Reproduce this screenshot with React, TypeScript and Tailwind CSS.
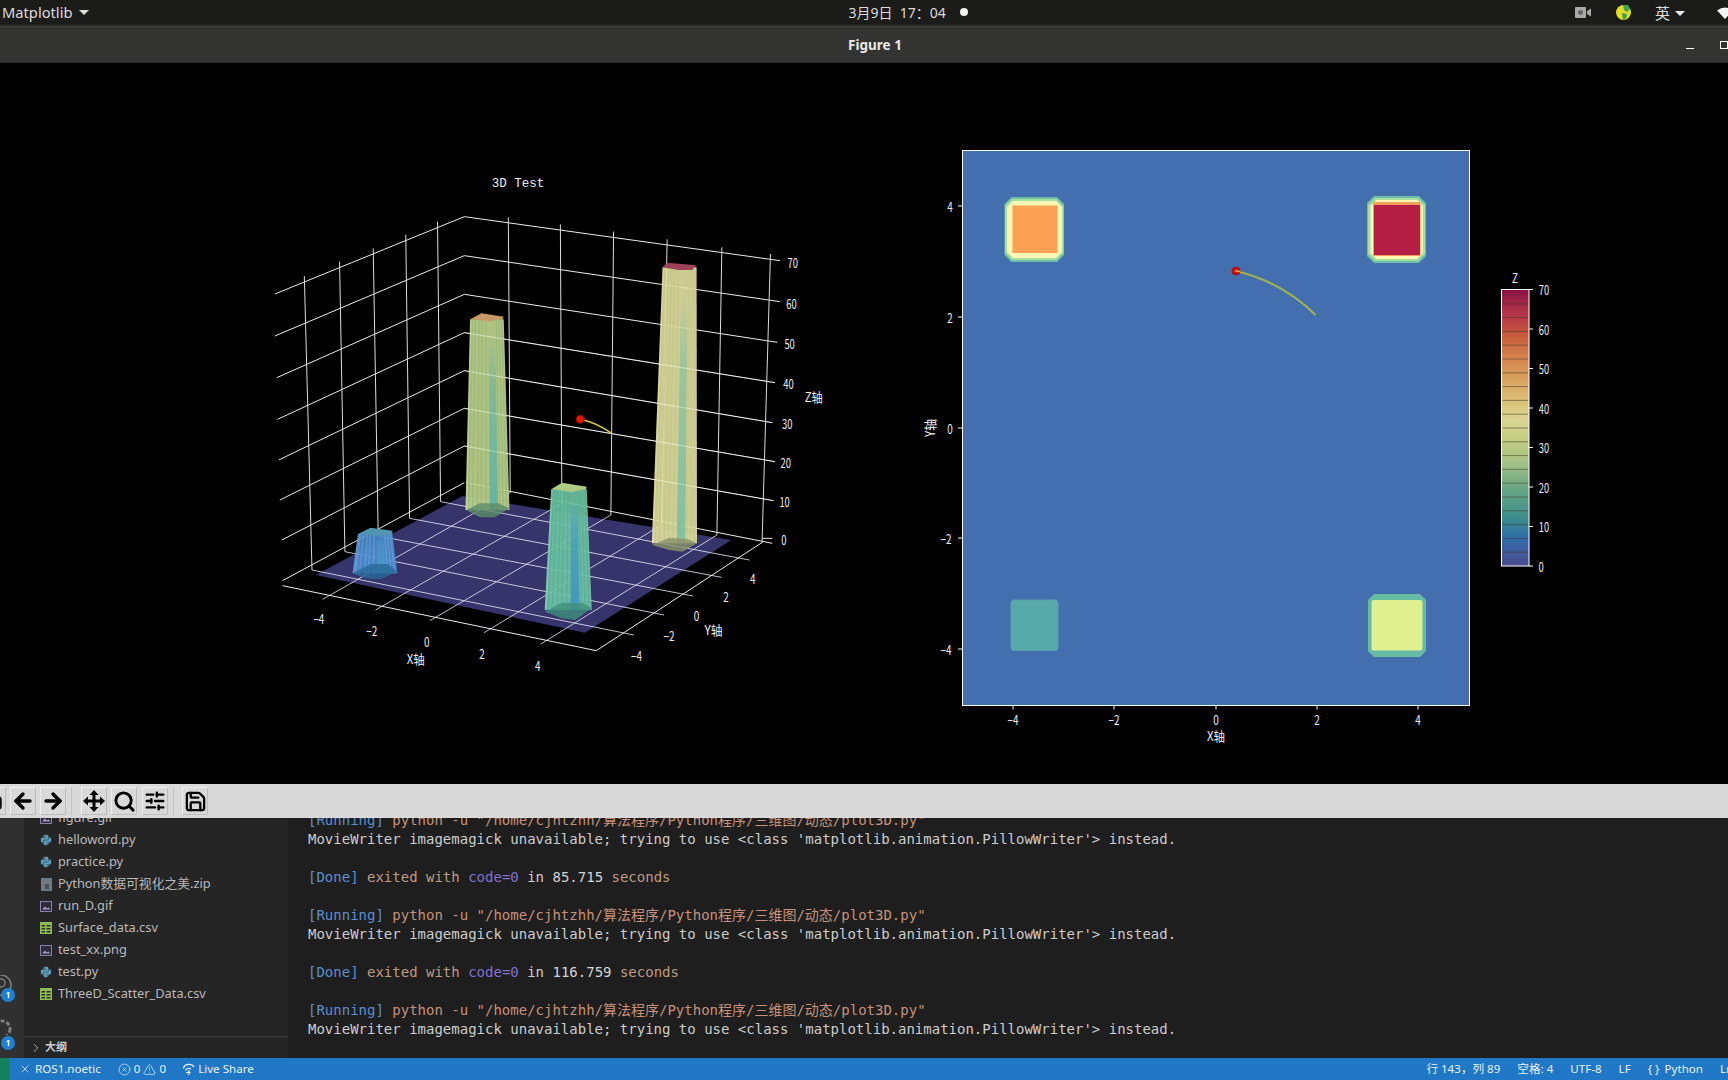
import { ArrowLeft, ArrowRight, ChevronRight, CircleX, Home, Save, Search, SlidersHorizontal, TriangleAlert, X } from "lucide-react"
import { FaPython } from "react-icons/fa"

const CHART_FONT = "'Noto Sans CJK SC', 'Liberation Sans', sans-serif"

// the 3D plot was measured on a stretched crop, so convert here
const px = (x: number) => x / 2.613
const py = (y: number) => y / 3
const pts = (list: number[][]) => list.map(([x, y]) => `${px(x)},${py(y)}`).join(" ")

function Seg({ a, b, c, w = 1 }: { a: number[]; b: number[]; c: string; w?: number }) {
  return <line x1={px(a[0])} y1={py(a[1])} x2={px(b[0])} y2={py(b[1])} stroke={c} strokeWidth={w} />
}

function Label({ x, y, t, w, rotate }: { x: number; y: number; t: string; w: number; rotate?: boolean }) {
  return (
    <text
      x={x}
      y={y}
      textAnchor="middle"
      dominantBaseline="central"
      fontSize={13}
      fill="#eeeeee"
      fontFamily={CHART_FONT}
      textLength={w}
      lengthAdjust="spacingAndGlyphs"
      transform={rotate ? `rotate(-90 ${x} ${y})` : undefined}
    >
      {t}
    </text>
  )
}

interface BarProps {
  top: number[]
  bot: number[]
  cap: number[][]
  capColor: string
  body: string
  line: string
  core: string
  base: number[][]
  baseColor: string
  id: string
}

const STRIPES = [0.07, 0.16, 0.27, 0.36, 0.47, 0.78, 0.86, 0.94]

function Bar({ top, bot, cap, capColor, body, line, core, base, baseColor, id }: BarProps) {
  const at = (f: number, t: number) => {
    const l = top[0] + (bot[0] - top[0]) * t
    const r = top[1] + (bot[1] - top[1]) * t
    return [l + (r - l) * f, top[2] + (bot[2] - top[2]) * t]
  }
  const quad = (a: number, b: number, from = 0) => pts([at(a, from), at(b, from), at(b, 1), at(a, 1)])
  return (
    <g>
      <defs>
        <linearGradient id={id} x1="0" y1="0" x2="0" y2="1">
          <stop offset="0" stopColor={core} stopOpacity="0" />
          <stop offset="0.3" stopColor={core} stopOpacity="0.6" />
          <stop offset="1" stopColor={core} stopOpacity="0.95" />
        </linearGradient>
      </defs>
      <polygon points={quad(0, 1)} fill={body} fillOpacity="0.9" />
      <polygon points={quad(0, 0.05)} fill="#ffffff" fillOpacity="0.14" />
      {STRIPES.map((f) => (
        <Seg key={f} a={at(f, 0)} b={at(f, 1)} c={line} w={1.4} />
      ))}
      <polygon points={quad(0.55, 0.74, 0.08)} fill={`url(#${id})`} />
      <polygon points={pts(base)} fill={baseColor} fillOpacity="0.82" />
      <polygon points={pts(cap)} fill={capColor} />
    </g>
  )
}

function Plot3D() {
  const white = "rgba(255,255,255,0.92)"
  const grey = "#dcdcdc"
  const floorLine = "rgba(225,225,240,0.85)"
  const leftEnds = [[170, 402, 65], [287, 528, 65], [403, 653, 70], [518, 778, 72], [632, 900, 75], [745, 1020, 78], [858, 1140, 83], [968, 1262, 85]]
  const rightEnds = [[170, 302, 1385], [287, 425, 1385], [403, 547, 1378], [518, 668, 1372], [632, 788, 1365], [745, 905, 1372], [858, 1022, 1368]]
  const zLabels = [[1418, 307, "70"], [1415, 430, "60"], [1410, 550, "50"], [1407, 670, "40"], [1404, 790, "30"], [1400, 908, "20"], [1397, 1024, "10"], [1395, 1137, "0"]] as const
  const xLabels = [[180, 1376, "−4"], [318, 1410, "−2"], [462, 1445, "0"], [606, 1480, "2"], [752, 1515, "4"]] as const
  const yLabels = [[1314, 1255, "4"], [1244, 1310, "2"], [1167, 1367, "0"], [1095, 1425, "−2"], [1010, 1485, "−4"]] as const
  return (
    <svg width={650} height={520} className="mt-5 shrink-0">
      <text x={px(700)} y={py(67) + 2} textAnchor="middle" dominantBaseline="central" fontSize={12.5} fill="#eeeeee" fontFamily="'Liberation Mono', monospace">
        3D Test
      </text>

      <polygon points={pts([[555, 1008], [1258, 1140], [875, 1418], [172, 1245]])} fill="#37346c" />

      {/* walls */}
      {leftEnds.map(([y0, y1, x1], i) => (
        <Seg key={i} a={[560, y0]} b={[x1, y1]} c={white} />
      ))}
      {rightEnds.map(([y0, y1, x1], i) => (
        <Seg key={i} a={[560, y0]} b={[x1, y1]} c={white} />
      ))}
      <Seg a={[565, 968]} b={[1365, 1150]} c={white} />
      {[[490, 185, 498, 1025], [407, 224, 417, 1075], [322, 265, 335, 1128], [234, 305, 248, 1175], [142, 348, 162, 1230]].map(([a, b, c, d], i) => (
        <Seg key={i} a={[a, b]} b={[c, d]} c={grey} />
      ))}
      {[[675, 172, 680, 998], [811, 193, 815, 1030], [950, 215, 943, 1065], [1090, 238, 1075, 1095], [1233, 262, 1220, 1125], [1360, 282, 1338, 1146]].map(([a, b, c, d], i) => (
        <Seg key={i} a={[a, b]} b={[c, d]} c={grey} />
      ))}

      {/* floor grid */}
      {[[498, 1025, 1305, 1200], [417, 1075, 1232, 1252], [335, 1128, 1158, 1308], [248, 1175, 1082, 1365], [162, 1230, 1003, 1425]].map(([a, b, c, d], i) => (
        <Seg key={i} a={[a, b]} b={[c, d]} c={floorLine} />
      ))}
      {[[680, 998, 190, 1318], [815, 1030, 328, 1350], [943, 1065, 470, 1382], [1075, 1095, 612, 1418], [1220, 1125, 760, 1452]].map(([a, b, c, d], i) => (
        <Seg key={i} a={[a, b]} b={[c, d]} c={floorLine} />
      ))}
      <Seg a={[85, 1277]} b={[905, 1472]} c={white} />
      <Seg a={[905, 1472]} b={[1340, 1146]} c={white} />
      <Seg a={[1338, 1135]} b={[1365, 1135]} c={white} />

      <Bar
        id="barBlue"
        top={[282, 372, 1122]}
        bot={[268, 385, 1240]}
        cap={[[282, 1122], [315, 1103], [372, 1112], [372, 1122], [340, 1128]]}
        capColor="#5295ae"
        body="#4b8dd0"
        line="rgba(110,170,220,0.55)"
        core="#4a98c8"
        base={[[268, 1240], [315, 1212], [360, 1212], [385, 1235], [340, 1258], [300, 1255]]}
        baseColor="#2a6a9a"
      />
      <Bar
        id="barGreen"
        top={[575, 663, 478]}
        bot={[563, 678, 1050]}
        cap={[[575, 478], [605, 460], [663, 470], [660, 478], [625, 484]]}
        capColor="#c99a68"
        body="#c2d78f"
        line="rgba(150,185,125,0.75)"
        core="#62b3a3"
        base={[[565, 1050], [600, 1030], [650, 1030], [678, 1045], [640, 1072], [600, 1072]]}
        baseColor="#5d8c68"
      />
      <Bar
        id="barTeal"
        top={[787, 880, 988]}
        bot={[770, 893, 1350]}
        cap={[[787, 988], [815, 968], [880, 980], [878, 988], [840, 996]]}
        capColor="#aecb84"
        body="#6fc6a6"
        line="rgba(90,175,145,0.8)"
        core="#3f96c0"
        base={[[770, 1355], [815, 1328], [870, 1330], [893, 1345], [850, 1380], [815, 1375]]}
        baseColor="#3e8f7e"
      />
      <Bar
        id="barCream"
        top={[1078, 1167, 322]}
        bot={[1050, 1168, 1150]}
        cap={[[1078, 322], [1090, 308], [1167, 316], [1155, 330], [1120, 330]]}
        capColor="#9c4158"
        body="#e5e2a3"
        line="rgba(195,200,135,0.8)"
        core="#7dc0a0"
        base={[[1050, 1155], [1095, 1133], [1145, 1138], [1168, 1150], [1130, 1175], [1095, 1170]]}
        baseColor="#8a9268"
      />

      {/* gridlines read through the translucent bars */}
      <Seg a={[560, 518]} b={[1372, 668]} c="rgba(255,255,255,0.35)" />
      <Seg a={[560, 632]} b={[1365, 788]} c="rgba(255,255,255,0.35)" />
      <Seg a={[560, 745]} b={[1372, 905]} c="rgba(255,255,255,0.35)" />
      <Seg a={[560, 858]} b={[1368, 1022]} c="rgba(255,255,255,0.35)" />

      <path d={`M${px(863)} ${py(778)} Q${px(905)} ${py(788)} ${px(945)} ${py(820)}`} fill="none" stroke="#cfc93f" strokeWidth={1.6} />
      <circle cx={px(863)} cy={py(778)} r={4} fill="#ee1408" stroke="#8c0c06" strokeWidth={1} />

      {zLabels.map(([x, y, t]) => (
        <Label key={t} x={px(x)} y={py(y)} t={t} w={t.length * 5.2} />
      ))}
      {xLabels.map(([x, y, t]) => (
        <Label key={t} x={px(x)} y={py(y)} t={t} w={t.length * 5.5} />
      ))}
      {yLabels.map(([x, y, t]) => (
        <Label key={t} x={px(x)} y={py(y)} t={t} w={t.length * 5.5} />
      ))}
      <Label x={px(1473)} y={py(710)} t="Z轴" w={18} />
      <Label x={px(433)} y={py(1495)} t="X轴" w={18} />
      <Label x={px(1211)} y={py(1408)} t="Y轴" w={18} />
    </svg>
  )
}

function octagon(x0: number, y0: number, x1: number, y1: number, c: number) {
  return `${x0 + c},${y0} ${x1 - c},${y0} ${x1},${y0 + c} ${x1},${y1 - c} ${x1 - c},${y1} ${x0 + c},${y1} ${x0},${y1 - c} ${x0},${y0 + c}`
}

function Contour() {
  // inner group origin is (950,140) on the page
  const xTicks = [[63, "−4"], [164, "−2"], [266, "0"], [367, "2"], [468, "4"]] as const
  const yTicks = [[66, "4"], [177, "2"], [288, "0"], [398, "−2"], [509, "−4"]] as const
  const bands = [
    ["0", "#4b4a90"], ["0.1", "#2f6da8"], ["0.17", "#3c8c8e"], ["0.28", "#68a783"], ["0.38", "#a8c386"],
    ["0.46", "#c3cc80"], ["0.52", "#d8d493"], ["0.58", "#dcc77f"], ["0.67", "#d9a55f"], ["0.75", "#d68550"],
    ["0.83", "#c75d3c"], ["0.9", "#b83a48"], ["1", "#8a1244"],
  ]
  const lines = Array.from({ length: 19 }, (_, i) => 276 * (i + 1) / 20)
  const cbTicks = [0, 10, 20, 30, 40, 50, 60, 70]
  return (
    <svg width={700} height={610} className="ml-[20px] shrink-0">
      <defs>
        <linearGradient id="cb" x1="0" y1="1" x2="0" y2="0">
          {bands.map(([o, c]) => (
            <stop key={o} offset={o} stopColor={c} />
          ))}
        </linearGradient>
      </defs>
      <g transform="translate(30 0)">
        <rect x={12.5} y={10.5} width={507} height={555} fill="#446fae" stroke="#ffffff" />

        {/* top left peak */}
        <polygon points={octagon(54.5, 57, 114, 122, 7)} fill="#6dbfa5" />
        <polygon points={octagon(55, 59, 113.5, 120, 7)} fill="#a8dea0" />
        <polygon points={octagon(57, 61, 112, 118, 6)} fill="#f8f6b4" />
        <rect x={62.5} y={65.5} width={45} height={47.5} fill="#fca055" />

        {/* top right peak */}
        <polygon points={octagon(417, 56, 476, 123, 7)} fill="#6dbfa5" />
        <polygon points={octagon(418, 58, 475, 121, 7)} fill="#a8dea0" />
        <polygon points={octagon(420.5, 60, 473, 119, 6)} fill="#fbf7b2" />
        <rect x={423} y={62} width={47.5} height={54} fill="#f6a05c" />
        <rect x={424} y={65} width={46} height={50} fill="#b51f45" />

        {/* lower peaks */}
        <rect x={61} y={460} width={47} height={50.5} rx={3} fill="#57aaa9" stroke="#5ba0b0" />
        <polygon points={octagon(418, 454, 476, 517, 6)} fill="#66bba3" />
        <rect x={421.5} y={460} width={51} height={50.5} rx={2} fill="#e0ef8f" />

        <path d="M286 131 Q332 142 365.6 175" fill="none" stroke="#a3b34a" strokeWidth={2} />
        <circle cx={286} cy={131} r={4} fill="#d8100c" stroke="#8c0c06" strokeWidth={0.8} />
        <line x1={285} y1={131} x2={290} y2={131.5} stroke="#f6b040" strokeWidth={1.4} />

        {xTicks.map(([x, t]) => (
          <g key={t}>
            <line x1={x} y1={566} x2={x} y2={569.5} stroke="#ffffff" />
            <Label x={x} y={579} t={t} w={t.length * 5.5} />
          </g>
        ))}
        <Label x={266} y={595} t="X轴" w={18} />
        {yTicks.map(([y, t]) => (
          <g key={t}>
            <line x1={8} y1={y} x2={12} y2={y} stroke="#ffffff" />
            <Label x={t.length > 1 ? -4 : 0} y={y} t={t} w={t.length * 5.5} />
          </g>
        ))}
        <Label x={-21} y={288} t="Y轴" w={18} rotate />

        <rect x={551.5} y={149.5} width={27.5} height={276.5} fill="url(#cb)" stroke="#ffffff" />
        {lines.map((d) => (
          <line key={d} x1={552.5} x2={578} y1={426 - d} y2={426 - d} stroke="rgba(70,60,40,0.55)" />
        ))}
        {cbTicks.map((v) => {
          const y = 426 - (v / 70) * 276.5
          return (
            <g key={v}>
              <line x1={579} y1={y} x2={583} y2={y} stroke="#ffffff" />
              <Label x={v === 0 ? 591 : 594} y={y} t={String(v)} w={String(v).length * 5.2} />
            </g>
          )
        })}
        <Label x={565} y={137} t="Z" w={6} />
      </g>
    </svg>
  )
}

function ToolButton({ children, className = "" }: { children: React.ReactNode; className?: string }) {
  return (
    <div className={`flex h-[28px] w-[26px] shrink-0 items-center justify-center border border-[#eeeeee] border-b-[#bdbdbd] border-r-[#bdbdbd] ${className}`}>
      {children}
    </div>
  )
}

function MoveIcon() {
  return (
    <svg width={24} height={24} viewBox="0 0 24 24">
      <path d="M12 1l4.500 5h-3v4.500H18v-3l5 4.500-5 4.500v-3h-4.500V18h3L12 23l-4.500-5h3v-4.500H6v3L1 12l5-4.500v3h4.500V6h-3z" fill="#000" />
    </svg>
  )
}

function Toolbar() {
  return (
    <div className="flex h-[34px] shrink-0 items-center gap-[4px] bg-[#d9d9d9] pl-[10px]">
      <ToolButton className="-ml-[30px]">
        <Home size={20} strokeWidth={3} color="#111" />
      </ToolButton>
      <ToolButton>
        <ArrowLeft size={24} strokeWidth={3.4} color="#000" />
      </ToolButton>
      <ToolButton>
        <ArrowRight size={24} strokeWidth={3.4} color="#000" />
      </ToolButton>
      <div className="mx-[1px] h-[28px] w-px bg-[#c4c4c4]" />
      <ToolButton className="ml-[4px]">
        <MoveIcon />
      </ToolButton>
      <ToolButton>
        <Search size={23} strokeWidth={3} color="#000" />
      </ToolButton>
      <ToolButton className="ml-[1px]">
        <SlidersHorizontal size={22} strokeWidth={2.6} color="#000" />
      </ToolButton>
      <div className="mx-[1px] h-[28px] w-px bg-[#c4c4c4]" />
      <ToolButton className="ml-[3px]">
        <Save size={23} strokeWidth={2.4} color="#000" />
      </ToolButton>
    </div>
  )
}

function CsvIcon() {
  return (
    <svg width={12} height={12} viewBox="0 0 12 12">
      <rect width={12} height={12} fill="#8dbb55" />
      <path d="M1.500 3h3.500v1.500H1.500zM6.500 3h4v1.500h-4zM1.500 6h3.500v1.500H1.500zM6.500 6h4v1.500h-4zM1.500 9h3.500v1.500H1.500zM6.500 9h4v1.500h-4z" fill="#2b3320" />
    </svg>
  )
}

function ImgIcon() {
  return (
    <svg width={12} height={11} viewBox="0 0 12 11">
      <rect x={0.5} y={0.5} width={11} height={10} fill="#2d2a3a" stroke="#8a7fa8" />
      <path d="M2 8.500l3-3 2 2 1.500-1 2 2z" fill="#a79bc4" />
    </svg>
  )
}

function ZipIcon() {
  return (
    <svg width={11} height={13} viewBox="0 0 11 13">
      <rect width={11} height={13} fill="#6f7a80" />
      <rect x={4} y={6} width={4} height={5} fill="#4a5257" />
    </svg>
  )
}

const PyIcon = () => <FaPython size={12} color="#5b9bb8" />

const files: [string, React.ReactNode][] = [
  ["figure.gif", <ImgIcon key="a" />],
  ["helloword.py", <PyIcon key="b" />],
  ["practice.py", <PyIcon key="c" />],
  ["Python数据可视化之美.zip", <ZipIcon key="d" />],
  ["run_D.gif", <ImgIcon key="e" />],
  ["Surface_data.csv", <CsvIcon key="f" />],
  ["test_xx.png", <ImgIcon key="g" />],
  ["test.py", <PyIcon key="h" />],
  ["ThreeD_Scatter_Data.csv", <CsvIcon key="i" />],
]

function Sidebar() {
  return (
    <div className="flex w-[264px] shrink-0 flex-col bg-[#252526] [font-family:'Noto_Sans','Noto_Sans_CJK_SC',sans-serif]">
      <div className="-mt-[11px] flex-1">
        {files.map(([name, icon]) => (
          <div key={name} className="flex h-[22px] items-center text-[12.8px] text-[#b9b9b9]">
            <div className="flex w-[34px] shrink-0 justify-end pr-[6px] pl-[16px]">{icon}</div>
            <span>{name}</span>
          </div>
        ))}
      </div>
      <div className="flex h-[22px] items-center gap-[2px] border-t border-[#3c3c3c] pl-[5px] text-[11px] font-bold text-[#cccccc]">
        <ChevronRight size={14} strokeWidth={1.4} />
        大纲
      </div>
    </div>
  )
}

function Badge({ top }: { top: string }) {
  return (
    <div className={`absolute left-px flex h-[14px] w-[14px] items-center justify-center rounded-full bg-[#1f7fd0] text-[8px] font-bold text-white ${top}`}>
      1
    </div>
  )
}

function ActivityBar() {
  return (
    <div className="relative w-[24px] shrink-0 bg-[#303031]">
      <svg width={24} height={60} className="absolute left-0 top-[157px]" fill="none" stroke="#7d7d7d" strokeWidth={1.5}>
        <circle cx={1} cy={10} r={10} />
        <circle cx={1} cy={8} r={4} />
        <circle cx={2} cy={54} r={8} strokeDasharray="4 2" strokeWidth={3} />
      </svg>
      <Badge top="top-[170px]" />
      <Badge top="top-[218px]" />
    </div>
  )
}

const blue = "text-[#5b8fd0]"
const tan = "text-[#bf9a80]"
const purple = "text-[#8270cc]"

function Running() {
  return (
    <>
      <div>
        <span className={blue}>[Running]</span> <span className="text-[#c6917a]">python -u "/home/cjhtzhh/算法程序/Python程序/三维图/动态/plot3D.py"</span>
      </div>
      <div className="text-[#cccccc]">MovieWriter imagemagick unavailable; trying to use &lt;class 'matplotlib.animation.PillowWriter'&gt; instead.</div>
    </>
  )
}

function Done({ time }: { time: string }) {
  return (
    <div>
      <span className={blue}>[Done]</span> <span className={tan}>exited with</span> <span className={purple}>code=0</span>{" "}
      <span className="text-[#cccccc]">in</span> <span className="text-[#d4d4d4]">{time}</span> <span className={tan}>seconds</span>
    </div>
  )
}

function Output() {
  return (
    <div className="min-w-0 flex-1 overflow-hidden bg-[#1e1e1e] pl-[20px] text-[14px] leading-[19px] whitespace-pre [font-family:'DejaVu_Sans_Mono','Noto_Sans_CJK_SC',monospace]">
      <div className="-mt-[7px]">
        <Running />
        <div className="h-[19px]" />
        <Done time="85.715" />
        <div className="h-[19px]" />
        <Running />
        <div className="h-[19px]" />
        <Done time="116.759" />
        <div className="h-[19px]" />
        <Running />
      </div>
    </div>
  )
}

function StatusBar() {
  return (
    <div className="flex h-[22px] shrink-0 items-center whitespace-nowrap bg-[#1f77c6] text-[11.6px] text-[#e8f1fa] [font-family:'Noto_Sans','Noto_Sans_CJK_SC',sans-serif]">
      <div className="h-full w-[10px] bg-[#16825d]" />
      <X size={12} strokeWidth={1.5} className="ml-[9px]" />
      <span className="ml-[4px]">ROS1.noetic</span>
      <CircleX size={13} strokeWidth={1.3} className="ml-[17px]" />
      <span className="ml-[3px]">0</span>
      <TriangleAlert size={13} strokeWidth={1.3} className="ml-[3px]" />
      <span className="ml-[3px]">0</span>
      <svg width={14} height={14} viewBox="0 0 14 14" fill="none" stroke="currentColor" strokeWidth={1.2} className="ml-[16px]">
        <path d="M1.500 6.500A5.500 4.500 0 0 1 12 5M3.500 8.500A3.500 3 0 0 1 9 7M6 13l2-2.500-2-2M8 10.500H4" />
      </svg>
      <span className="ml-[2px]">Live Share</span>
      <div className="flex-1" />
      <span>行 143，列 89</span>
      <span className="ml-[17px]">空格: 4</span>
      <span className="ml-[17px]">UTF-8</span>
      <span className="ml-[17px]">LF</span>
      <span className="ml-[17px]">{"{ }"}</span>
      <span className="ml-[5px]">Python</span>
      <span className="ml-[17px] w-[8px] overflow-hidden">Ln</span>
    </div>
  )
}

function TopBar() {
  return (
    <div className="relative flex h-[26px] shrink-0 items-center border-b-2 border-[#262624] bg-[#1b1b19] text-[14.7px] text-[#dcdcdc] [font-family:'Noto_Sans','Noto_Sans_CJK_SC',sans-serif]">
      <span className="ml-[2px]">Matplotlib</span>
      <div className="ml-[6px] h-0 w-0 border-x-[5px] border-t-[5px] border-x-transparent border-t-[#dddddd]" />
      <div className="ml-[760px] flex items-center gap-[14px]">
        <span className="whitespace-pre text-[14px]">3月9日  17：04</span>
        <div className="h-[8px] w-[8px] rounded-full bg-[#f2f2f2]" />
      </div>
      <svg width={16} height={11} viewBox="0 0 16 11" className="absolute left-[1575px] top-[7px]">
        <rect width={11} height={11} rx={1} fill="#a9a9a9" />
        <circle cx={5.500} cy={5.500} r={2.500} fill="#666" />
        <path d="M12 4l4-2.500v8L12 7z" fill="#a9a9a9" />
      </svg>
      <svg width={15} height={15} viewBox="0 0 15 15" className="absolute left-[1616px] top-[5px]">
        <circle cx={7.500} cy={7.500} r={7.500} fill="#e3dc22" />
        <path d="M7 0h5l2 4-3 3-3-2zM6 8l5 1-1 5-3 1z" fill="#3aa655" />
      </svg>
      <span className="absolute left-[1655px] top-[2px] text-[15px]">英</span>
      <div className="absolute left-[1675px] top-[11px] h-0 w-0 border-x-[5px] border-t-[5px] border-x-transparent border-t-[#eeeeee]" />
      <svg width={16} height={12} viewBox="0 0 16 12" className="absolute left-[1717px] top-[7px]">
        <path d="M0 3.500Q8 -2.500 16 3.500L8 12z" fill="#f4f4f4" />
      </svg>
    </div>
  )
}

function TitleBar() {
  return (
    <div className="relative flex h-[37px] shrink-0 items-center justify-center border-t border-[#424240] border-b border-b-[#262624] bg-[#333331] pt-[2px] text-[13.5px] font-bold text-[#e8e8e8] [font-family:'Noto_Sans',sans-serif]">
      <span className="ml-[22px]">Figure 1</span>
      <div className="absolute left-[1686px] top-[21px] h-px w-[8px] bg-white" />
      <div className="absolute left-[1720px] top-[14px] h-[8px] w-[8px] border border-white" />
    </div>
  )
}

export default function App() {
  return (
    <div className="flex h-[1080px] w-[1728px] flex-col overflow-hidden bg-black">
      <TopBar />
      <TitleBar />
      <div className="flex min-h-0 flex-1 items-start bg-black pl-[250px] pt-[77px]">
        <Plot3D />
        <Contour />
      </div>
      <Toolbar />
      <div className="flex h-[240px] shrink-0 overflow-hidden">
        <ActivityBar />
        <Sidebar />
        <Output />
      </div>
      <StatusBar />
    </div>
  )
}
